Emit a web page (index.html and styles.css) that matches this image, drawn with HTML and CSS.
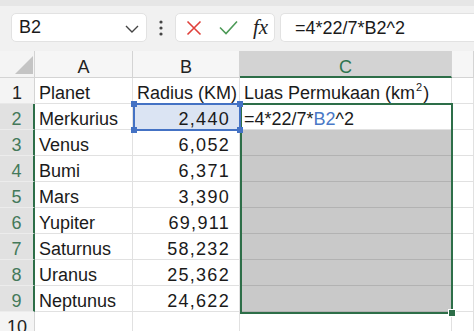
FILE: index.html
```html
<!DOCTYPE html>
<html lang="id">

<head>
    <meta charset="UTF-8">
    <meta name="viewport" content="width=device-width, initial-scale=1.0">
    <title>Luas Permukaan Planet</title>
    <link rel="stylesheet" href="styles.css">
</head>

<body>
    <!-- bilah rumus -->
    <div class="toolbar">
        <div class="namebox">
            <span>B2</span>
            <svg class="chevron" width="14" height="8" viewBox="0 0 14 8">
                <polyline points="1,1 7,7 13,1" fill="none" stroke="#444" stroke-width="1.4" />
            </svg>
        </div>
        <svg class="dots" width="6" height="18" viewBox="0 0 6 18">
            <circle cx="3" cy="3" r="1.6" fill="#444" />
            <circle cx="3" cy="9" r="1.6" fill="#444" />
            <circle cx="3" cy="15" r="1.6" fill="#444" />
        </svg>
        <div class="buttons">
            <svg width="16" height="16" viewBox="0 0 16 16">
                <path d="M1.5 1.5 L14.5 14.5 M14.5 1.5 L1.5 14.5" stroke="#e0403a" stroke-width="1.6" fill="none" />
            </svg>
            <svg width="19" height="15" viewBox="0 0 19 15">
                <polyline points="1,7.5 7,13.5 18,1.5" fill="none" stroke="#4c9a57" stroke-width="1.6" />
            </svg>
            <span class="fx">fx</span>
        </div>
        <div class="formula">=4*22/7*B2^2</div>
    </div>

    <!-- lembar kerja -->
    <div class="sheet">
        <div class="corner"><div class="tri"></div></div>
        <div class="colhead">A</div>
        <div class="colhead">B</div>
        <div class="colhead active">C</div>
        <div class="colhead"></div>

        <div class="rowhead">1</div>
        <div class="cell">Planet</div>
        <div class="cell">Radius (KM)</div>
        <div class="cell">Luas Permukaan (km<sup class="sup">2</sup>)</div>
        <div class="cell"></div>

        <div class="rowhead sel">2</div>
        <div class="cell">Merkurius</div>
        <div class="cell num ref">2,440</div>
        <div class="cell">=4*22/7*<span class="blue">B2</span>^2</div>
        <div class="cell"></div>

        <div class="rowhead sel">3</div>
        <div class="cell">Venus</div>
        <div class="cell num">6,052</div>
        <div class="cell grey"></div>
        <div class="cell"></div>

        <div class="rowhead sel">4</div>
        <div class="cell">Bumi</div>
        <div class="cell num">6,371</div>
        <div class="cell grey"></div>
        <div class="cell"></div>

        <div class="rowhead sel">5</div>
        <div class="cell">Mars</div>
        <div class="cell num">3,390</div>
        <div class="cell grey"></div>
        <div class="cell"></div>

        <div class="rowhead sel">6</div>
        <div class="cell">Yupiter</div>
        <div class="cell num">69,911</div>
        <div class="cell grey"></div>
        <div class="cell"></div>

        <div class="rowhead sel">7</div>
        <div class="cell">Saturnus</div>
        <div class="cell num">58,232</div>
        <div class="cell grey"></div>
        <div class="cell"></div>

        <div class="rowhead sel">8</div>
        <div class="cell">Uranus</div>
        <div class="cell num">25,362</div>
        <div class="cell grey"></div>
        <div class="cell"></div>

        <div class="rowhead sel">9</div>
        <div class="cell">Neptunus</div>
        <div class="cell num">24,622</div>
        <div class="cell grey"></div>
        <div class="cell"></div>

        <div class="rowhead">10</div>
        <div class="cell"></div>
        <div class="cell"></div>
        <div class="cell"></div>
        <div class="cell"></div>

        <!-- kotak seleksi -->
        <div class="refbox">
            <i class="h tl"></i><i class="h tr"></i><i class="h bl"></i><i class="h br"></i>
        </div>
        <div class="selbox"><i class="fill"></i></div>
    </div>
</body>

</html>
```

FILE: styles.css
```css
body {
    margin: 0;
    font-family: "Liberation Sans", Arial, sans-serif;
    font-size: 18px;
    color: #1a1a1a;
    background-color: white;
    overflow: hidden;
}

.toolbar {
    display: flex;
    align-items: flex-start;
    height: 51px;
    padding: 7px 0 0 11px;
    box-sizing: border-box;
    background-color: #f1f1f1;
    border-top: 6px solid #e6e6e6;
}

.namebox {
    display: flex;
    align-items: center;
    justify-content: space-between;
    width: 136px;
    height: 29px;
    padding: 0 7px 0 7px;
    box-sizing: border-box;
    background-color: white;
    border: 1px solid #e2e2e2;
    border-radius: 5px;
}

.chevron {
    margin-top: 2px;
}

.dots {
    margin: 6px 11px 0 11px;
}

.buttons {
    display: flex;
    align-items: center;
    width: 100px;
    height: 29px;
    padding-left: 10px;
    box-sizing: border-box;
    background-color: white;
    border: 1px solid #e2e2e2;
    border-radius: 5px;
    gap: 17px;
}

.fx {
    font-family: "Liberation Serif", serif;
    font-style: italic;
    font-size: 21px;
    color: #222;
    margin-left: -2px;
}

.formula {
    flex: 1;
    height: 29px;
    margin-left: 5px;
    padding-left: 14px;
    line-height: 29px;
    box-sizing: border-box;
    background-color: white;
    border: 1px solid #e2e2e2;
    border-right: none;
    border-radius: 5px 0 0 5px;
}

.sheet {
    position: relative;
    display: grid;
    grid-template-columns: 35px 98px 107px 212px 1fr;
    grid-template-rows: 27px;
    grid-auto-rows: 26px;
}

.corner, .colhead, .rowhead, .cell {
    box-sizing: border-box;
    border-right: 1px solid #e1e1e1;
    border-bottom: 1px solid #e1e1e1;
    padding-top: 5px;
    line-height: 20px;
    white-space: nowrap;
}

.corner {
    padding-top: 0;
    background-color: #f4f4f4;
    border-bottom-color: #d4d4d4;
    border-right-color: #d4d4d4;
}

.tri {
    width: 0;
    height: 0;
    margin: 5px 0 0 15px;
    border-left: 18px solid transparent;
    border-bottom: 18px solid #c4c4c4;
}

.colhead {
    padding-top: 6px;
    text-align: center;
    background-color: #f6f6f6;
    border-right-color: #d4d4d4;
    border-bottom-color: #d4d4d4;
    color: #222;
}

.colhead.active {
    background-color: #d3d3d3;
    color: #2f7550;
    border-bottom: 2px solid #2d6e48;
}

.rowhead {
    text-align: center;
    background-color: #f4f4f4;
    border-right-color: #d4d4d4;
    border-bottom-color: #e8e8e8;
    color: #222;
}

.rowhead.sel {
    background-color: #e1e1e1;
    color: #44795a;
    border-right: 2px solid #2d6e48;
    border-bottom-color: #ececec;
}

.cell {
    padding-left: 4px;
}

.num {
    text-align: right;
    padding-right: 9px;
    letter-spacing: 1.3px;
}

.ref {
    background-color: #dbe4f3;
}

.grey {
    background-color: #c9c9c9;
    border-bottom-color: #b2b2b2;
}

.blue {
    color: #4a78c6;
}

.sup {
    font-size: 11px;
    line-height: 0;
    vertical-align: 8px;
    margin: 0 1px;
}

.refbox {
    position: absolute;
    left: 133px;
    top: 52px;
    width: 108px;
    height: 28px;
    box-sizing: border-box;
    border: 2px solid #4472c4;
    z-index: 3;
}

.h {
    position: absolute;
    width: 6px;
    height: 6px;
    background-color: #4472c4;
}

.tl { left: -4px; top: -4px; }
.tr { right: -4px; top: -4px; }
.bl { left: -4px; bottom: -4px; }
.br { right: -4px; bottom: -4px; }

.selbox {
    position: absolute;
    left: 240px;
    top: 52px;
    width: 213px;
    height: 211px;
    box-sizing: border-box;
    border: 2px solid #2d6e48;
    z-index: 2;
}

.fill {
    position: absolute;
    right: -5px;
    bottom: -5px;
    width: 6px;
    height: 6px;
    background-color: #2d6e48;
    border: 1px solid white;
}
```
